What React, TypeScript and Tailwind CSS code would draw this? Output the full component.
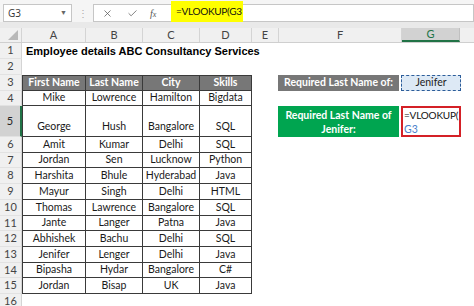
import { X, Check } from 'lucide-react';

const people = [
  ['Mike', 'Lowrence', 'Hamilton', 'Bigdata'],
  ['George', 'Hush', 'Bangalore', 'SQL'],
  ['Amit', 'Kumar', 'Delhi', 'SQL'],
  ['Jordan', 'Sen', 'Lucknow', 'Python'],
  ['Harshita', 'Bhule', 'Hyderabad', 'Java'],
  ['Mayur', 'Singh', 'Delhi', 'HTML'],
  ['Thomas', 'Lawrence', 'Bangalore', 'SQL'],
  ['Jante', 'Langer', 'Patna', 'Java'],
  ['Abhishek', 'Bachu', 'Delhi', 'SQL'],
  ['Jenifer', 'Lenger', 'Delhi', 'Java'],
  ['Bipasha', 'Hydar', 'Bangalore', 'C#'],
  ['Jordan', 'Bisap', 'UK', 'Java'],
];

// heights for rows 4..15
const heights = ['h-[15px]', 'h-[31px]', 'h-[16px]', 'h-[15px]', 'h-[16px]', 'h-[16px]', 'h-[16px]', 'h-[15px]', 'h-[16px]', 'h-[16px]', 'h-[15px]', 'h-[16px]'];

const colW = ['w-[64px]', 'w-[57px]', 'w-[57px]', 'w-[52px]'];

const headers = [
  { label: 'A', w: 'w-[64px]' },
  { label: 'B', w: 'w-[57px]' },
  { label: 'C', w: 'w-[57px]' },
  { label: 'D', w: 'w-[52px]' },
  { label: 'E', w: 'w-[27px]' },
  { label: 'F', w: 'w-[123px]' },
];

const cellFont = "font-['Lato','Open_Sans',sans-serif]";

function RowLabel({ n, h, active = false }: { n: number; h: string; active?: boolean }) {
  return (
    <div
      className={`${h} w-[22px] shrink-0 flex items-center justify-center text-[11px] ${cellFont} ${
        active ? 'bg-[#d2d2d2] border-r-2 border-[#217346] text-[#222]' : 'bg-[#f0f0f0] border-r border-[#d4d4d4] text-[#444]'
      } border-b border-b-[#e2e2e2]`}
    >
      {n}
    </div>
  );
}

export default function App() {
  return (
    <div className="w-[474px] h-[306px] overflow-hidden bg-white relative">
      {/* Formula bar */}
      <div className="h-[22px] flex items-end bg-[#f5f5f5] pl-[3px]">
        <div className="w-[69px] h-[18px] bg-white border border-[#c6c6c6] flex items-center justify-between px-[4px]">
          <span className="text-[10px] text-[#333] font-['Open_Sans',sans-serif]">G3</span>
          <span className="text-[7px] text-[#666]">▼</span>
        </div>
        <div className="w-[21px] h-[18px] flex items-center justify-center text-[#aaa] text-[10px]">⋮</div>
        <div className="flex-1 h-[18px] bg-white border border-[#c6c6c6] flex items-center">
          <div className="w-[77px] flex items-center text-[#555]">
            <X className="w-[11px] h-[11px] ml-[8px]" strokeWidth={1.6} />
            <Check className="w-[11px] h-[11px] ml-[14px]" strokeWidth={1.6} />
            <span className="ml-[12px] text-[10px] italic font-['Liberation_Serif',serif]">f<span className="text-[8px]">x</span></span>
          </div>
          <div className={`h-[21px] -mt-[3px] w-[72px] shrink-0 bg-[#ffff00] flex items-center pl-[5px] text-[10px] tracking-[-0.3px] text-[#111] whitespace-nowrap ${cellFont}`}>
            =VLOOKUP(G3
          </div>
        </div>
      </div>
      <div className="h-[6px] bg-[#e9e9e9]" />

      {/* Column headers */}
      <div className={`h-[15px] flex bg-[#f0f0f0] border-b border-[#cfcfcf] text-[11px] text-[#444] ${cellFont}`}>
        <div className="w-[22px] shrink-0 border-r border-[#d4d4d4] relative">
          <div className="absolute right-[3px] bottom-[2px] w-0 h-0 border-l-[10px] border-l-transparent border-b-[10px] border-b-[#b8b8b8]" />
        </div>
        {headers.map((h) => (
          <div key={h.label} className={`${h.w} shrink-0 border-r border-[#d4d4d4] flex items-center justify-center`}>
            {h.label}
          </div>
        ))}
        <div className="w-[58px] shrink-0 bg-[#d2d2d2] border-b-2 border-[#217346] border-r border-r-[#c0c0c0] flex items-center justify-center text-[#217346]">
          G
        </div>
        <div className="flex-1" />
      </div>

      {/* Row 1 */}
      <div className="h-[16px] flex">
        <RowLabel n={1} h="h-[16px]" />
        <div className="pl-[4px] flex items-center text-[11px] font-bold text-black font-['Liberation_Sans',Arial,sans-serif] whitespace-nowrap">
          Employee details ABC Consultancy Services
        </div>
      </div>

      {/* Row 2 */}
      <div className="h-[16px] flex">
        <RowLabel n={2} h="h-[16px]" />
      </div>

      {/* Row 3 */}
      <div className={`h-[16px] flex text-[10.5px] ${cellFont}`}>
        <RowLabel n={3} h="h-[16px]" />
        {['First Name', 'Last Name', 'City', 'Skills'].map((t, i) => (
          <div
            key={t}
            className={`${colW[i]} shrink-0 bg-[#777777] text-white font-bold flex items-center justify-center border-t border-r border-b border-[#3a3a3a] ${i === 0 ? 'border-l' : ''}`}
          >
            {t}
          </div>
        ))}
        <div className="w-[26px] shrink-0" />
        <div className="w-[121px] shrink-0 bg-[#777777] text-white font-bold flex items-center justify-center">
          Required Last Name of:
        </div>
        <div className="w-[2px] shrink-0" />
        <div className="w-[60px] shrink-0 bg-[#dde9f5] border border-dashed border-[#2c5d9a] flex items-center justify-center text-[#222]">
          Jenifer
        </div>
      </div>

      {/* Rows 4-15 */}
      {people.map((p, r) => {
        const tall = r === 1;
        return (
          <div key={r} className={`${heights[r]} flex text-[10.5px] text-[#1a1a1a] ${cellFont}`}>
            <RowLabel n={r + 4} h={heights[r]} active={tall} />
            {p.map((t, i) => (
              <div
                key={i}
                className={`${colW[i]} shrink-0 flex justify-center border-r border-b border-[#3a3a3a] ${i === 0 ? 'border-l' : ''} ${
                  tall ? 'items-end pb-[1px]' : 'items-center'
                }`}
              >
                {t}
              </div>
            ))}
            {tall && (
              <>
                <div className="w-[26px] shrink-0" />
                <div className="w-[121px] shrink-0 bg-[#00a550] text-white font-bold flex flex-col items-center justify-center leading-[14px]">
                  <span>Required Last Name of</span>
                  <span>Jenifer:</span>
                </div>
                <div className="w-[2px] shrink-0" />
                <div className="w-[60px] shrink-0 border-2 border-[#d42026] flex flex-col justify-center pl-[1px] leading-[14px] overflow-hidden">
                  <span className="text-[#111] text-[10px] tracking-[-0.2px] whitespace-nowrap">=VLOOKUP(</span>
                  <span className="text-[#4a7fcb]">G3</span>
                </div>
              </>
            )}
          </div>
        );
      })}

      {/* Row 16 */}
      <div className="h-[16px] flex">
        <RowLabel n={16} h="h-[16px]" />
      </div>
    </div>
  );
}
